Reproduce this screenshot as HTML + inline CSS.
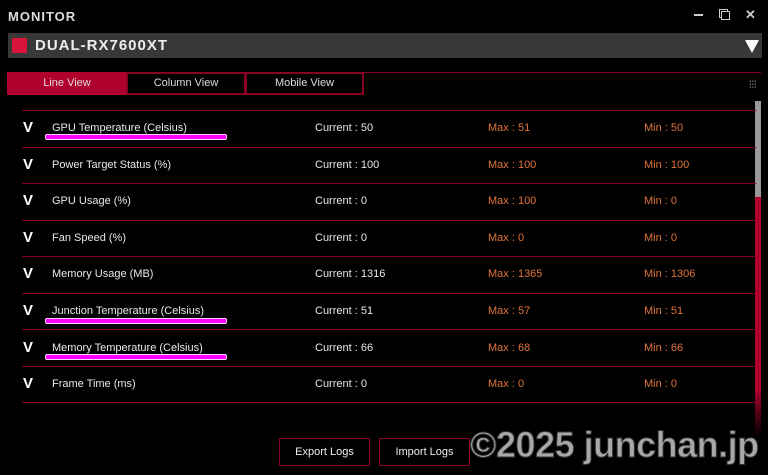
<!DOCTYPE html>
<html><head><meta charset="utf-8"><style>
*{margin:0;padding:0;box-sizing:border-box}
body{width:768px;height:475px;background:#000;font-family:"Liberation Sans",sans-serif;color:#e8e8e8;position:relative;overflow:hidden;font-size:11px}
.a{position:absolute;white-space:nowrap}
.title{left:8px;top:9px;font-weight:bold;font-size:13px;letter-spacing:1px;color:#ddd}
.dd{left:8px;top:33px;width:754px;height:25px;background:#383838}
.sq{left:12px;top:38px;width:15px;height:15px;background:#d8143a}
.dn{left:35px;top:37px;font-weight:bold;font-size:15px;letter-spacing:1px;color:#eee}
.tab{top:72px;height:23px;border:2px solid #8a0022;text-align:center;line-height:19px;font-size:11px;color:#ddd}
.row{left:22px;width:734px;height:1px;background:#8a0022}
.v{left:23px;font-weight:bold;font-size:15px;color:#fff}
.lbl{left:52px}
.cur{left:315px}
.mx{left:488px;color:#e0733a}
.mn{left:644px;color:#e0733a}
.ul{left:45px;width:182px;height:6px;background:#ff00ff;border:1px solid #fcf;border-radius:2px}
.btn{top:438px;width:91px;height:28px;border:1px solid #8a0022;text-align:center;line-height:26px;color:#eee}
</style></head><body>
<div class="a title">MONITOR</div>
<div class="a" style="left:694px;top:14px;width:9px;height:2px;background:#ccc"></div>
<div class="a" style="left:719px;top:9px;width:9px;height:9px;border:1px solid #ccc"></div>
<div class="a" style="left:721px;top:11px;width:9px;height:9px;border:1px solid #ccc;background:#000"></div>
<div class="a" style="left:745px;top:7px;font-size:13px;color:#ccc;font-weight:bold">✕</div>
<div class="a dd"></div>
<div class="a sq"></div>
<div class="a dn">DUAL-RX7600XT</div>
<div class="a" style="left:745px;top:40px;width:0;height:0;border-left:7px solid transparent;border-right:7px solid transparent;border-top:13px solid #fff"></div>
<div class="a tab" style="left:7px;width:120px;background:#b0002e;border-color:#b0002e">Line View</div>
<div class="a tab" style="left:126px;width:120px">Column View</div>
<div class="a tab" style="left:245px;width:119px">Mobile View</div>
<div class="a" style="left:363px;top:72px;width:398px;height:1px;background:#8a0022"></div>
<div class="a" style="left:749px;top:80px;font-size:10px;color:#bbb">⫶⫶⫶</div>
<div class="a" style="left:755px;top:101px;width:6px;height:96px;background:#999"></div>
<div class="a" style="left:755px;top:197px;width:6px;height:240px;background:linear-gradient(#b0002e 80%,#000)"></div>

<div class="a row" style="top:110px"></div>
<div class="a row" style="top:147px"></div>
<div class="a row" style="top:183px"></div>
<div class="a row" style="top:220px"></div>
<div class="a row" style="top:256px"></div>
<div class="a row" style="top:293px"></div>
<div class="a row" style="top:329px"></div>
<div class="a row" style="top:366px"></div>
<div class="a row" style="top:402px"></div>

<div class="a v" style="top:119px">V</div><div class="a lbl" style="top:122px">GPU Temperature (Celsius)</div><div class="a cur" style="top:122px">Current : 50</div><div class="a mx" style="top:122px">Max : 51</div><div class="a mn" style="top:122px">Min : 50</div>
<div class="a v" style="top:156px">V</div><div class="a lbl" style="top:159px">Power Target Status (%)</div><div class="a cur" style="top:159px">Current : 100</div><div class="a mx" style="top:159px">Max : 100</div><div class="a mn" style="top:159px">Min : 100</div>
<div class="a v" style="top:192px">V</div><div class="a lbl" style="top:195px">GPU Usage (%)</div><div class="a cur" style="top:195px">Current : 0</div><div class="a mx" style="top:195px">Max : 100</div><div class="a mn" style="top:195px">Min : 0</div>
<div class="a v" style="top:229px">V</div><div class="a lbl" style="top:232px">Fan Speed (%)</div><div class="a cur" style="top:232px">Current : 0</div><div class="a mx" style="top:232px">Max : 0</div><div class="a mn" style="top:232px">Min : 0</div>
<div class="a v" style="top:265px">V</div><div class="a lbl" style="top:268px">Memory Usage (MB)</div><div class="a cur" style="top:268px">Current : 1316</div><div class="a mx" style="top:268px">Max : 1365</div><div class="a mn" style="top:268px">Min : 1306</div>
<div class="a v" style="top:302px">V</div><div class="a lbl" style="top:305px">Junction Temperature (Celsius)</div><div class="a cur" style="top:305px">Current : 51</div><div class="a mx" style="top:305px">Max : 57</div><div class="a mn" style="top:305px">Min : 51</div>
<div class="a v" style="top:339px">V</div><div class="a lbl" style="top:342px">Memory Temperature (Celsius)</div><div class="a cur" style="top:342px">Current : 66</div><div class="a mx" style="top:342px">Max : 68</div><div class="a mn" style="top:342px">Min : 66</div>
<div class="a v" style="top:375px">V</div><div class="a lbl" style="top:378px">Frame Time (ms)</div><div class="a cur" style="top:378px">Current : 0</div><div class="a mx" style="top:378px">Max : 0</div><div class="a mn" style="top:378px">Min : 0</div>

<div class="a ul" style="top:134px"></div>
<div class="a ul" style="top:318px"></div>
<div class="a ul" style="top:354px"></div>

<div class="a btn" style="left:279px">Export Logs</div>
<div class="a btn" style="left:379px">Import Logs</div>
<div class="a" style="left:470px;top:424px;font-size:36px;font-weight:bold;color:#a8a8a8;-webkit-text-stroke:1px #333;letter-spacing:-0.5px;line-height:42px">©2025 junchan.jp</div>
</body></html>
